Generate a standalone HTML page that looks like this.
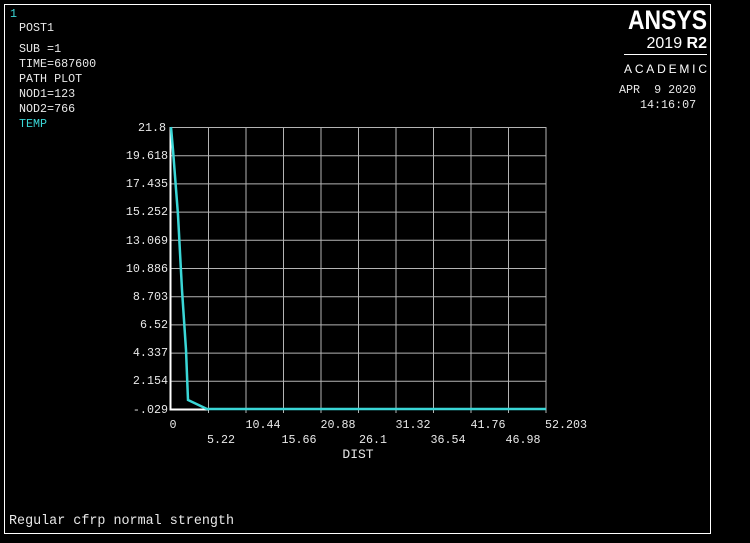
<!DOCTYPE html>
<html><head><meta charset="utf-8"><style>
html,body{margin:0;padding:0;background:#000;width:750px;height:543px;overflow:hidden}
svg{display:block}
text{font-family:"Liberation Mono",monospace;font-size:11.7px;fill:#e8e8e8;white-space:pre}
</style></head><body>
<svg width="750" height="543" viewBox="0 0 750 543" xml:space="preserve">
<rect x="4.5" y="4.5" width="706" height="529" fill="none" stroke="#fff" stroke-width="1"/>
<text x="10" y="17" style="fill:#3ad6d6">1</text>
<text x="19" y="31">POST1</text>
<text x="19" y="52">SUB =1</text>
<text x="19" y="67">TIME=687600</text>
<text x="19" y="82">PATH PLOT</text>
<text x="19" y="97">NOD1=123</text>
<text x="19" y="112">NOD2=766</text>
<text x="19" y="127" style="fill:#3ad6d6">TEMP</text>
<text x="707" y="29" text-anchor="end" style="font-family:'Liberation Sans',sans-serif;font-weight:bold;font-size:27px;fill:#fff" textLength="79" lengthAdjust="spacingAndGlyphs">ANSYS</text>
<text x="707" y="48" text-anchor="end" style="font-family:'Liberation Sans',sans-serif;font-size:16px;fill:#fff">2019 <tspan font-weight="bold">R2</tspan></text>
<rect x="624" y="54" width="83" height="1" fill="#fff"/>
<text x="624" y="73" style="font-family:'Liberation Sans',sans-serif;font-size:12px;fill:#fff" textLength="83" lengthAdjust="spacing">ACADEMIC</text>
<text x="619" y="93">APR  9 2020</text>
<text x="640" y="108">14:16:07</text>
<g stroke="#b4b4b4" stroke-width="1">
<line x1="171" y1="127.5" x2="546" y2="127.5"/>
<line x1="171" y1="155.7" x2="546" y2="155.7"/>
<line x1="171" y1="183.9" x2="546" y2="183.9"/>
<line x1="171" y1="212.1" x2="546" y2="212.1"/>
<line x1="171" y1="240.3" x2="546" y2="240.3"/>
<line x1="171" y1="268.5" x2="546" y2="268.5"/>
<line x1="171" y1="296.7" x2="546" y2="296.7"/>
<line x1="171" y1="324.9" x2="546" y2="324.9"/>
<line x1="171" y1="353.1" x2="546" y2="353.1"/>
<line x1="171" y1="381.3" x2="546" y2="381.3"/>
<line x1="208.5" y1="127" x2="208.5" y2="413"/>
<line x1="246" y1="127" x2="246" y2="413"/>
<line x1="283.5" y1="127" x2="283.5" y2="413"/>
<line x1="321" y1="127" x2="321" y2="413"/>
<line x1="358.5" y1="127" x2="358.5" y2="413"/>
<line x1="396" y1="127" x2="396" y2="413"/>
<line x1="433.5" y1="127" x2="433.5" y2="413"/>
<line x1="471" y1="127" x2="471" y2="413"/>
<line x1="508.5" y1="127" x2="508.5" y2="413"/>
<line x1="546" y1="127" x2="546" y2="413"/>
</g>
<g stroke="#fff" stroke-width="2">
<line x1="170.5" y1="127" x2="170.5" y2="410"/>
<line x1="169.5" y1="409.5" x2="209" y2="409.5"/>
</g>
<polyline points="171,127 173,150 178,215 182,290 186,350 188,400 207,409 546,409" fill="none" stroke="#3ad6d6" stroke-width="2.5"/>
<g text-anchor="end">
<text x="166" y="131">21.8</text>
<text x="168" y="159">19.618</text>
<text x="168" y="187">17.435</text>
<text x="168" y="215">15.252</text>
<text x="168" y="244">13.069</text>
<text x="168" y="272">10.886</text>
<text x="168" y="300">8.703</text>
<text x="168" y="328">6.52</text>
<text x="168" y="356">4.337</text>
<text x="168" y="384">2.154</text>
<text x="168" y="413">-.029</text>
</g>
<g text-anchor="middle">
<text x="173" y="428">0</text>
<text x="263" y="428">10.44</text>
<text x="338" y="428">20.88</text>
<text x="413" y="428">31.32</text>
<text x="488" y="428">41.76</text>
<text x="566" y="428">52.203</text>
<text x="221" y="443">5.22</text>
<text x="299" y="443">15.66</text>
<text x="373" y="443">26.1</text>
<text x="448" y="443">36.54</text>
<text x="523" y="443">46.98</text>
<text x="358" y="458" style="font-size:13px">DIST</text>
</g>
<text x="9" y="524" style="font-size:13.4px">Regular cfrp normal strength</text>
</svg>
</body></html>
